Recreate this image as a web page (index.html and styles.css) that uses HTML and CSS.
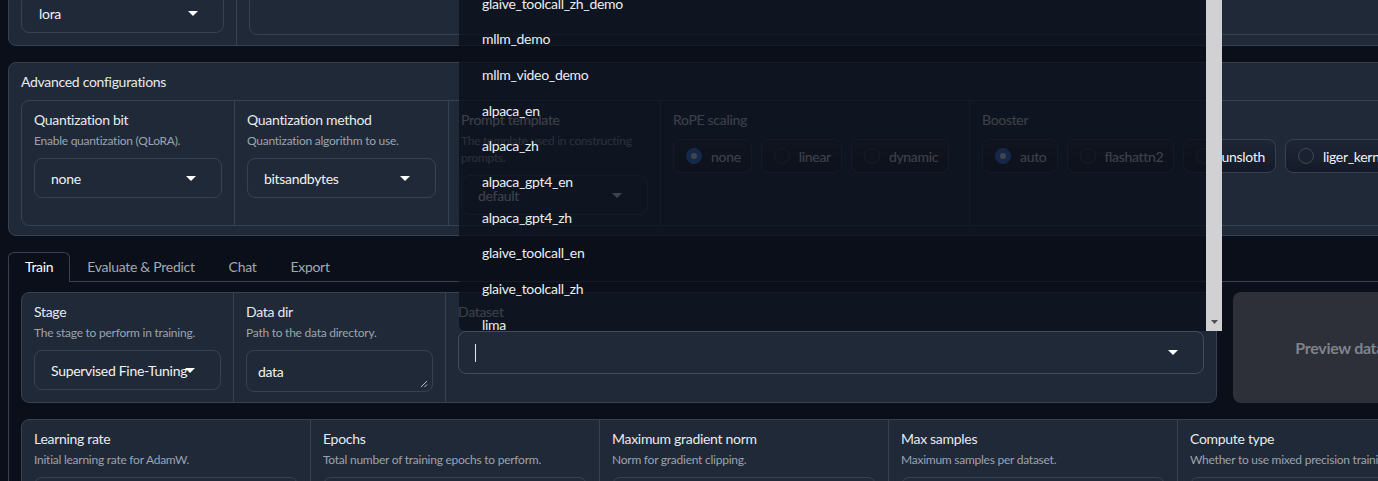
FILE: index.html
```html
<!DOCTYPE html>
<html lang="en">
<head>
<meta charset="utf-8">
<title>Train</title>
<link rel="stylesheet" href="styles.css">
</head>
<body>
<div class="page">

  <div class="group top-group">
    <div class="cell top-cell">
      <div class="dd dd-short"><span class="dd-val">lora</span><svg class="caret" width="10" height="5" viewBox="0 0 10 5"><path d="M0 0H10L5 5Z" fill="#fff"/></svg></div>
    </div>
    <div class="cell top-cell">
      <div class="tbox tbox-top"></div>
    </div>
  </div>

  <div class="panel adv">
    <div class="panel-title">Advanced configurations</div>
    <div class="group adv-group">
      <div class="cell">
        <div class="lbl">Quantization bit</div>
        <div class="info">Enable quantization (QLoRA).</div>
        <div class="dd"><span class="dd-val">none</span><svg class="caret" width="10" height="5" viewBox="0 0 10 5"><path d="M0 0H10L5 5Z" fill="#fff"/></svg></div>
      </div>
      <div class="cell">
        <div class="lbl">Quantization method</div>
        <div class="info">Quantization algorithm to use.</div>
        <div class="dd"><span class="dd-val">bitsandbytes</span><svg class="caret" width="10" height="5" viewBox="0 0 10 5"><path d="M0 0H10L5 5Z" fill="#fff"/></svg></div>
      </div>
      <div class="cell">
        <div class="lbl">Prompt template</div>
        <div class="info">The template used in constructing<br>prompts.</div>
        <div class="dd"><span class="dd-val">default</span><svg class="caret" width="10" height="5" viewBox="0 0 10 5"><path d="M0 0H10L5 5Z" fill="#fff"/></svg></div>
      </div>
      <div class="cell">
        <div class="lbl">RoPE scaling</div>
        <div class="radios">
          <div class="radio"><span class="dot on"></span>none</div>
          <div class="radio"><span class="dot"></span>linear</div>
          <div class="radio"><span class="dot"></span>dynamic</div>
        </div>
      </div>
      <div class="cell">
        <div class="lbl">Booster</div>
        <div class="radios">
          <div class="radio"><span class="dot on"></span>auto</div>
          <div class="radio"><span class="dot"></span>flashattn2</div>
          <div class="radio"><span class="dot"></span>unsloth</div>
          <div class="radio"><span class="dot"></span>liger_kernel</div>
        </div>
      </div>
    </div>
  </div>

  <div class="tabs">
    <div class="tab-nav">
      <div class="tab selected">Train</div>
      <div class="tab">Evaluate &amp; Predict</div>
      <div class="tab">Chat</div>
      <div class="tab">Export</div>
    </div>
    <div class="tab-panel">
      <div class="row">
        <div class="group stage-group">
          <div class="cell">
            <div class="lbl">Stage</div>
            <div class="info">The stage to perform in training.</div>
            <div class="dd"><span class="dd-val">Supervised Fine-Tuning</span><svg class="caret" width="10" height="5" viewBox="0 0 10 5"><path d="M0 0H10L5 5Z" fill="#fff"/></svg></div>
          </div>
          <div class="cell">
            <div class="lbl">Data dir</div>
            <div class="info">Path to the data directory.</div>
            <div class="tarea"><span>data</span><svg class="grip" width="8" height="8" viewBox="0 0 8 8"><path d="M7 1L1 7M7 4.5L4.5 7" stroke="#b8bcc4" stroke-width="1"/></svg></div>
          </div>
          <div class="cell">
            <div class="lbl">Dataset</div>
            <div class="ms">
              <span class="cursor"></span>
              <svg class="caret" width="10" height="5" viewBox="0 0 10 5"><path d="M0 0H10L5 5Z" fill="#fff"/></svg>
              <div class="menu">
                <div class="menu-list">
                  <ul class="opts">
                    <li>identity</li>
                    <li>alpaca_en_demo</li>
                    <li>alpaca_zh_demo</li>
                    <li>glaive_toolcall_en_demo</li>
                    <li>glaive_toolcall_zh_demo</li>
                    <li>mllm_demo</li>
                    <li>mllm_video_demo</li>
                    <li>alpaca_en</li>
                    <li>alpaca_zh</li>
                    <li>alpaca_gpt4_en</li>
                    <li>alpaca_gpt4_zh</li>
                    <li>glaive_toolcall_en</li>
                    <li>glaive_toolcall_zh</li>
                    <li>lima</li>
                  </ul>
                </div>
                <div class="menu-scroll"><svg width="7" height="4" viewBox="0 0 7 4"><path d="M0 0H7L3.5 4Z" fill="#505155"/></svg></div>
              </div>
            </div>
          </div>
        </div>
        <button class="preview">Preview dataset</button>
      </div>

      <div class="group params-group">
        <div class="cell">
          <div class="lbl">Learning rate</div>
          <div class="info">Initial learning rate for AdamW.</div>
          <div class="tbox"></div>
        </div>
        <div class="cell">
          <div class="lbl">Epochs</div>
          <div class="info">Total number of training epochs to perform.</div>
          <div class="tbox"></div>
        </div>
        <div class="cell">
          <div class="lbl">Maximum gradient norm</div>
          <div class="info">Norm for gradient clipping.</div>
          <div class="tbox"></div>
        </div>
        <div class="cell">
          <div class="lbl">Max samples</div>
          <div class="info">Maximum samples per dataset.</div>
          <div class="tbox"></div>
        </div>
        <div class="cell">
          <div class="lbl">Compute type</div>
          <div class="info">Whether to use mixed precision training.</div>
          <div class="tbox"></div>
        </div>
      </div>
    </div>
  </div>

</div>
</body>
</html>
```
FILE: styles.css
```css
html {
  overflow: hidden;
  background: #0b0f19;
}
body {
  margin: 0;
  background: #0b0f19;
  color: #e5e7eb;
  font-family: Lato, "Noto Sans", sans-serif;
  font-size: 14px;
  letter-spacing: -0.3px;
}
.page {
  width: 1472px;
  padding: 8px;
}

/* generic group with 1px dividers */
.group {
  display: grid;
  gap: 1px;
  background: #374151;
  border: 1px solid #374151;
  border-radius: 8px;
}
.cell {
  background: #1f2937;
  padding: 10px 12px;
  min-width: 0;
}
.group > .cell:first-child {
  border-radius: 7px 0 0 7px;
}
.group > .cell:last-child {
  border-radius: 0 7px 7px 0;
}
.lbl {
  font-size: 14px;
  line-height: 18px;
  color: #e8eaee;
  white-space: nowrap;
}
.info {
  margin-top: 3px;
  font-size: 12px;
  line-height: 17px;
  letter-spacing: -0.25px;
  color: #9ca3af;
  white-space: nowrap;
}

/* dropdown */
.dd {
  margin-top: 9px;
  height: 40px;
  box-sizing: border-box;
  border: 1px solid #374151;
  border-radius: 8px;
  display: flex;
  align-items: center;
  padding: 0 25px 0 16px;
  font-size: 14px;
  color: #f0f2f5;
}
.dd-val {
  flex: 1 1 0;
  min-width: 0;
  white-space: nowrap;
}
.caret {
  flex: none;
  display: block;
}

/* top partial block */
.top-group {
  margin-top: -22px;
  grid-template-columns: 227px 1fr;
  height: 58px;
  align-items: start;
}
.top-group .top-cell {
  padding: 7px 12px 0;
  height: 100%;
  box-sizing: border-box;
}
.top-cell .dd-short {
  margin-top: 0;
  height: 39px;
  padding-left: 17px;
}
.top-cell .tbox-top {
  margin-top: 0;
  height: 41px;
}

/* advanced panel */
.panel {
  background: #1f2937;
  border: 1px solid #374151;
  border-radius: 8px;
}
.adv {
  margin-top: 16px;
  padding: 9px 12px 9px;
}
.panel-title {
  font-size: 14px;
  line-height: 20px;
  margin-bottom: 8px;
  color: #e8eaee;
}
.adv-group {
  grid-template-columns: 212px 213px 211px 308px 1fr;
}

/* radios */
.radios {
  margin-top: 10px;
  display: flex;
  gap: 9px;
}
.radio {
  flex: none;
  height: 34px;
  box-sizing: border-box;
  display: flex;
  align-items: center;
  gap: 9px;
  padding: 0 10px 0 12px;
  border: 1px solid #374151;
  border-radius: 8px;
  background: linear-gradient(to bottom, #1e2636, #141a27);
  font-size: 14px;
  color: #f0f2f5;
  white-space: nowrap;
}
.dot {
  width: 16px;
  height: 16px;
  box-sizing: border-box;
  border-radius: 50%;
  border: 1px solid #3f4858;
  background: #1a2130;
  display: flex;
  align-items: center;
  justify-content: center;
}
.dot.on {
  background: #3b82f6;
  border-color: #3b82f6;
}
.dot.on::after {
  content: "";
  width: 6px;
  height: 6px;
  border-radius: 50%;
  background: #ffffff;
}

/* tabs */
.tabs {
  margin-top: 16px;
}
.tab-nav {
  display: flex;
  height: 29px;
  border-bottom: 1px solid #374151;
}
.tab {
  height: 30px;
  box-sizing: border-box;
  margin-bottom: -1px;
  padding: 0 16px 2px;
  display: flex;
  align-items: center;
  font-size: 14px;
  color: #a3a9b3;
  border: 1px solid transparent;
  border-bottom: none;
  border-radius: 6px 6px 0 0;
}
.tab.selected {
  color: #ffffff;
  border-color: #374151;
  background: #0b0f19;
}
.tab-panel {
  border: 1px solid #374151;
  border-top: none;
  border-radius: 0 0 8px 8px;
  padding: 10px 12px 12px;
}
.row {
  display: flex;
  gap: 16px;
}
.stage-group {
  flex: none;
  width: 1196px;
  box-sizing: border-box;
  grid-template-columns: 211px 211px 1fr;
}
.tarea {
  margin-top: 9px;
  height: 42px;
  box-sizing: border-box;
  border: 1px solid #374151;
  border-radius: 8px;
  display: flex;
  align-items: center;
  justify-content: space-between;
  padding: 0 4px 0 11px;
  font-size: 14px;
  color: #f0f2f5;
}
.grip {
  align-self: flex-end;
  margin-bottom: 3px;
}
.ms {
  position: relative;
  margin-top: 10px;
  height: 43px;
  box-sizing: border-box;
  border: 1px solid #434c5c;
  border-radius: 8px;
  display: flex;
  align-items: center;
  justify-content: space-between;
  padding: 0 25px 0 16px;
}
.cursor {
  width: 1px;
  height: 18px;
  background: #e5e7eb;
}

/* dropdown options menu */
.menu {
  position: absolute;
  left: 0;
  bottom: calc(100% + 1px);
  width: 763px;
  height: 420px;
  display: flex;
  z-index: 10;
  background: rgba(11, 15, 25, 0.78);
  border-radius: 0 0 0 6px;
  overflow: hidden;
}
.menu-list {
  flex: 1;
  display: flex;
  flex-direction: column;
  justify-content: flex-end;
  overflow: hidden;
}
.opts {
  list-style: none;
  margin: 0 0 -11px;
  padding: 0;
}
.opts li {
  height: 35.67px;
  display: flex;
  align-items: center;
  padding-left: 23px;
  font-size: 14px;
  color: #eceef2;
  white-space: nowrap;
}
.menu-scroll {
  flex: none;
  width: 16px;
  background: #d1d1d4;
  display: flex;
  flex-direction: column;
  justify-content: flex-end;
  align-items: center;
  padding-bottom: 7px;
  box-sizing: border-box;
}

/* preview button */
.preview {
  flex: 1;
  border: none;
  border-radius: 8px;
  background: #2d3038;
  color: #7f838b;
  font-family: Lato, "Noto Sans", sans-serif;
  font-size: 16px;
  font-weight: 700;
  letter-spacing: -0.3px;
  white-space: nowrap;
  padding: 0;
}

/* params row */
.params-group {
  margin-top: 16px;
  grid-template-columns: repeat(5, 288px);
}
.tbox {
  margin-top: 9px;
  height: 40px;
  box-sizing: border-box;
  border: 1px solid #374151;
  border-radius: 8px;
}
```
